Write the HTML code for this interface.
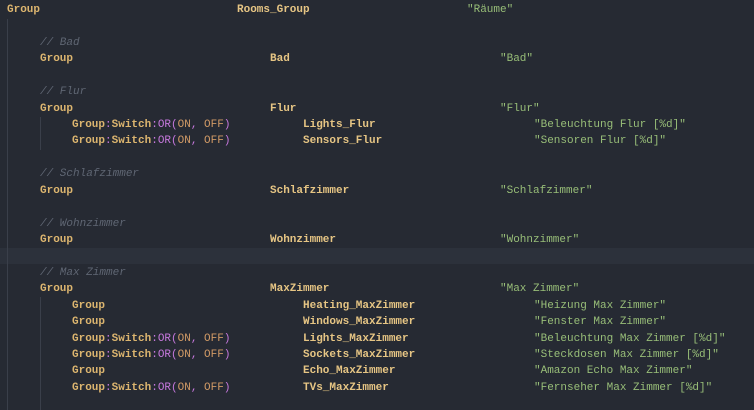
<!DOCTYPE html>
<html><head><meta charset="utf-8"><style>
html,body{margin:0;padding:0}
body{width:754px;height:410px;background:#262a33;overflow:hidden;position:relative;font-family:"Liberation Mono",monospace;font-size:11px;}
.l{position:absolute;left:0;width:754px;height:16.43px;line-height:16.43px;white-space:pre}
.l span{position:absolute;top:0}
.g{color:#dcb56f;font-weight:bold}
.n{color:#e6c584;font-weight:bold}
.s{color:#98be78}
.p{color:#c678dd}
.o{color:#d19a66}
.c{color:#5f6673;font-style:italic}
.hl{position:absolute;left:0;width:754px;top:248px;height:16.4px;background:#2c313b}
.guide{position:absolute;width:1px;background:#3a3f4a}
b.p,b.o{font-weight:normal}
</style></head><body>
<div class="hl"></div>
<div class="guide" style="left:7px;top:19px;height:391px"></div>
<div class="guide" style="left:40px;top:117px;height:33px"></div>
<div class="guide" style="left:40px;top:297px;height:113px"></div>

<div class="l" style="top:2px"><span class="g" style="left:7px">Group</span><span class="n" style="left:237px">Rooms_Group</span><span class="s" style="left:467px">"Räume"</span></div>

<div class="l" style="top:34.9px"><span class="c" style="left:40px">// Bad</span></div>
<div class="l" style="top:51.3px"><span class="g" style="left:40px">Group</span><span class="n" style="left:270px">Bad</span><span class="s" style="left:500px">"Bad"</span></div>

<div class="l" style="top:84.2px"><span class="c" style="left:40px">// Flur</span></div>
<div class="l" style="top:100.6px"><span class="g" style="left:40px">Group</span><span class="n" style="left:270px">Flur</span><span class="s" style="left:500px">"Flur"</span></div>
<div class="l" style="top:117px"><span style="left:72px"><b class="g">Group</b><b class="p">:</b><b class="g">Switch</b><b class="p">:OR(</b><b class="o">ON</b><b class="p">, </b><b class="o">OFF</b><b class="p">)</b></span><span class="n" style="left:303px">Lights_Flur</span><span class="s" style="left:534px">"Beleuchtung Flur [%d]"</span></div>
<div class="l" style="top:133.4px"><span style="left:72px"><b class="g">Group</b><b class="p">:</b><b class="g">Switch</b><b class="p">:OR(</b><b class="o">ON</b><b class="p">, </b><b class="o">OFF</b><b class="p">)</b></span><span class="n" style="left:303px">Sensors_Flur</span><span class="s" style="left:534px">"Sensoren Flur [%d]"</span></div>

<div class="l" style="top:166.3px"><span class="c" style="left:40px">// Schlafzimmer</span></div>
<div class="l" style="top:182.7px"><span class="g" style="left:40px">Group</span><span class="n" style="left:270px">Schlafzimmer</span><span class="s" style="left:500px">"Schlafzimmer"</span></div>

<div class="l" style="top:215.6px"><span class="c" style="left:40px">// Wohnzimmer</span></div>
<div class="l" style="top:232px"><span class="g" style="left:40px">Group</span><span class="n" style="left:270px">Wohnzimmer</span><span class="s" style="left:500px">"Wohnzimmer"</span></div>

<div class="l" style="top:264.9px"><span class="c" style="left:40px">// Max Zimmer</span></div>
<div class="l" style="top:281.3px"><span class="g" style="left:40px">Group</span><span class="n" style="left:270px">MaxZimmer</span><span class="s" style="left:500px">"Max Zimmer"</span></div>

<div class="l" style="top:297.7px"><span class="g" style="left:72px">Group</span><span class="n" style="left:303px">Heating_MaxZimmer</span><span class="s" style="left:534px">"Heizung Max Zimmer"</span></div>
<div class="l" style="top:314.1px"><span class="g" style="left:72px">Group</span><span class="n" style="left:303px">Windows_MaxZimmer</span><span class="s" style="left:534px">"Fenster Max Zimmer"</span></div>
<div class="l" style="top:330.6px"><span style="left:72px"><b class="g">Group</b><b class="p">:</b><b class="g">Switch</b><b class="p">:OR(</b><b class="o">ON</b><b class="p">, </b><b class="o">OFF</b><b class="p">)</b></span><span class="n" style="left:303px">Lights_MaxZimmer</span><span class="s" style="left:534px">"Beleuchtung Max Zimmer [%d]"</span></div>
<div class="l" style="top:347px"><span style="left:72px"><b class="g">Group</b><b class="p">:</b><b class="g">Switch</b><b class="p">:OR(</b><b class="o">ON</b><b class="p">, </b><b class="o">OFF</b><b class="p">)</b></span><span class="n" style="left:303px">Sockets_MaxZimmer</span><span class="s" style="left:534px">"Steckdosen Max Zimmer [%d]"</span></div>
<div class="l" style="top:363.4px"><span class="g" style="left:72px">Group</span><span class="n" style="left:303px">Echo_MaxZimmer</span><span class="s" style="left:534px">"Amazon Echo Max Zimmer"</span></div>
<div class="l" style="top:379.8px"><span style="left:72px"><b class="g">Group</b><b class="p">:</b><b class="g">Switch</b><b class="p">:OR(</b><b class="o">ON</b><b class="p">, </b><b class="o">OFF</b><b class="p">)</b></span><span class="n" style="left:303px">TVs_MaxZimmer</span><span class="s" style="left:534px">"Fernseher Max Zimmer [%d]"</span></div>
</body></html>
